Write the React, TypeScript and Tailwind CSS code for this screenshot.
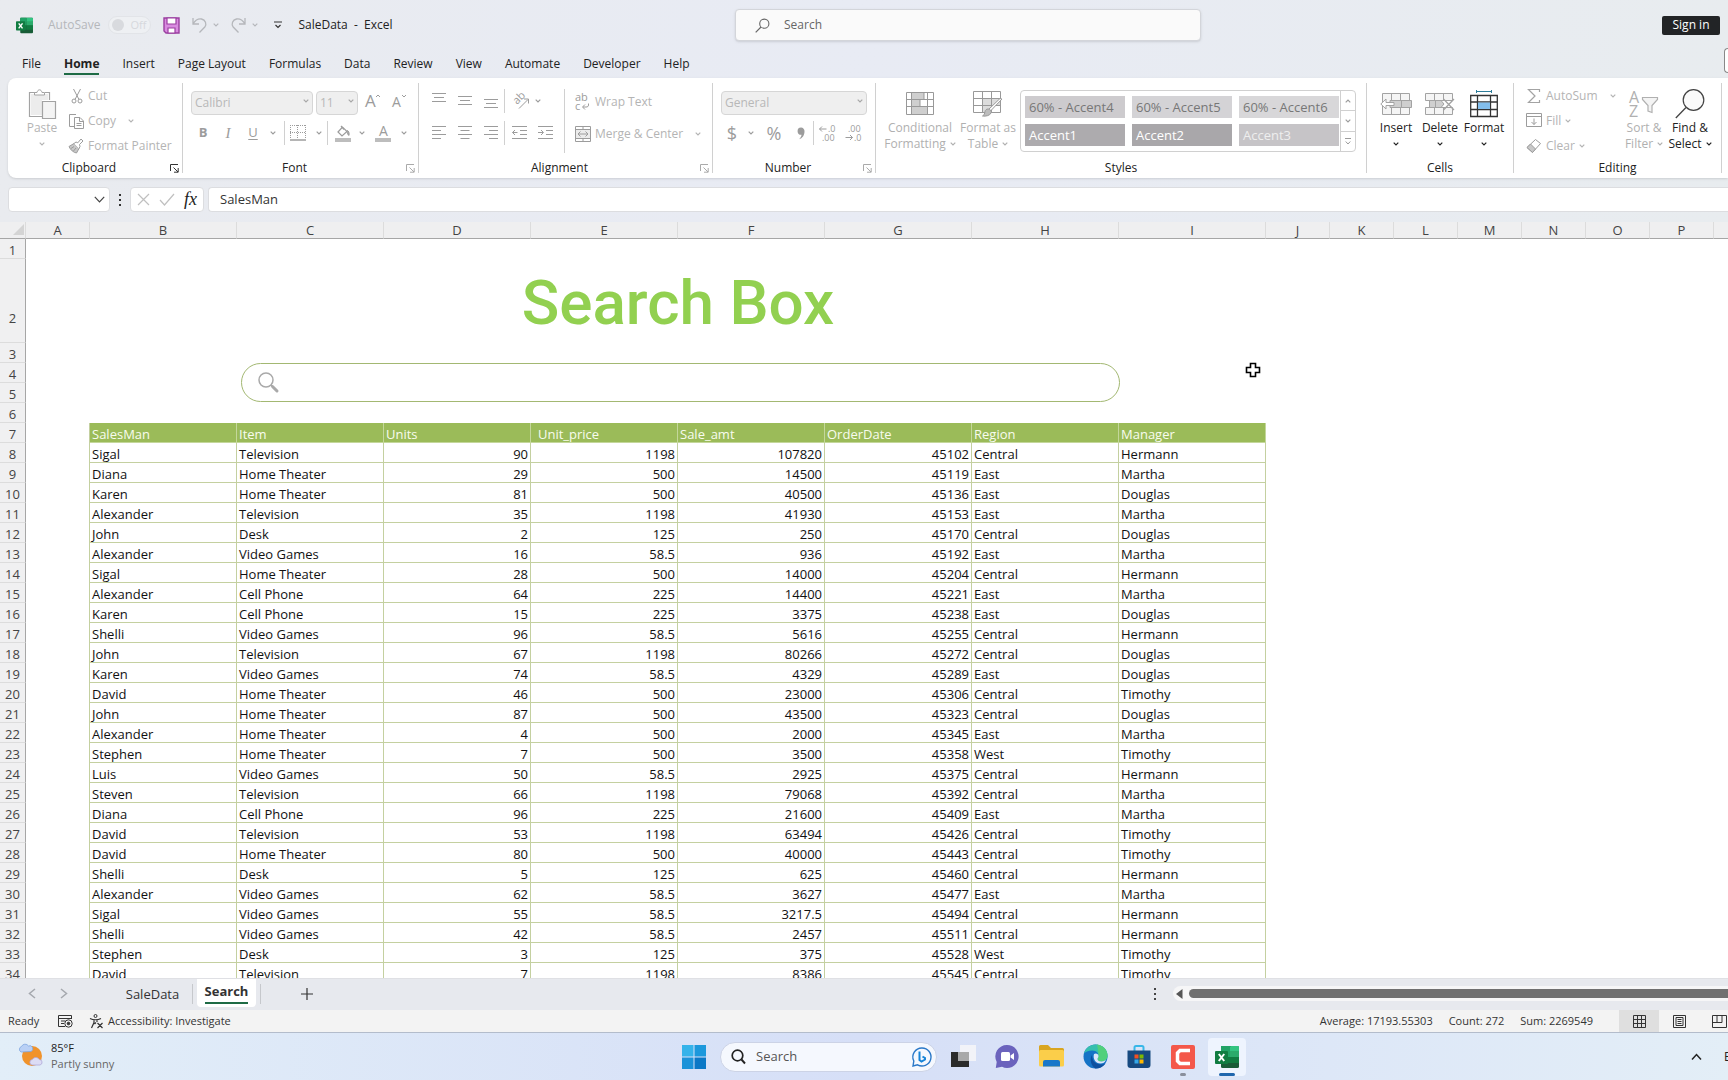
import type { ReactNode } from "react";
import clsx from "clsx";

type SaleRow = [string, string, string, string, string, string, string, string];

const TABS = [
  "File",
  "Home",
  "Insert",
  "Page Layout",
  "Formulas",
  "Data",
  "Review",
  "View",
  "Automate",
  "Developer",
  "Help",
];

const WIDE_COLUMNS = ["B", "C", "D", "E", "F", "G", "H", "I"];
const NARROW_COLUMNS = ["J", "K", "L", "M", "N", "O", "P", "Q"];

const HEADERS = [
  "SalesMan",
  "Item",
  "Units",
  "Unit_price",
  "Sale_amt",
  "OrderDate",
  "Region",
  "Manager",
];

const SALES: SaleRow[] = [
  ["Sigal", "Television", "90", "1198", "107820", "45102", "Central", "Hermann"],
  ["Diana", "Home Theater", "29", "500", "14500", "45119", "East", "Martha"],
  ["Karen", "Home Theater", "81", "500", "40500", "45136", "East", "Douglas"],
  ["Alexander", "Television", "35", "1198", "41930", "45153", "East", "Martha"],
  ["John", "Desk", "2", "125", "250", "45170", "Central", "Douglas"],
  ["Alexander", "Video Games", "16", "58.5", "936", "45192", "East", "Martha"],
  ["Sigal", "Home Theater", "28", "500", "14000", "45204", "Central", "Hermann"],
  ["Alexander", "Cell Phone", "64", "225", "14400", "45221", "East", "Martha"],
  ["Karen", "Cell Phone", "15", "225", "3375", "45238", "East", "Douglas"],
  ["Shelli", "Video Games", "96", "58.5", "5616", "45255", "Central", "Hermann"],
  ["John", "Television", "67", "1198", "80266", "45272", "Central", "Douglas"],
  ["Karen", "Video Games", "74", "58.5", "4329", "45289", "East", "Douglas"],
  ["David", "Home Theater", "46", "500", "23000", "45306", "Central", "Timothy"],
  ["John", "Home Theater", "87", "500", "43500", "45323", "Central", "Douglas"],
  ["Alexander", "Home Theater", "4", "500", "2000", "45345", "East", "Martha"],
  ["Stephen", "Home Theater", "7", "500", "3500", "45358", "West", "Timothy"],
  ["Luis", "Video Games", "50", "58.5", "2925", "45375", "Central", "Hermann"],
  ["Steven", "Television", "66", "1198", "79068", "45392", "Central", "Martha"],
  ["Diana", "Cell Phone", "96", "225", "21600", "45409", "East", "Martha"],
  ["David", "Television", "53", "1198", "63494", "45426", "Central", "Timothy"],
  ["David", "Home Theater", "80", "500", "40000", "45443", "Central", "Timothy"],
  ["Shelli", "Desk", "5", "125", "625", "45460", "Central", "Hermann"],
  ["Alexander", "Video Games", "62", "58.5", "3627", "45477", "East", "Martha"],
  ["Sigal", "Video Games", "55", "58.5", "3217.5", "45494", "Central", "Hermann"],
  ["Shelli", "Video Games", "42", "58.5", "2457", "45511", "Central", "Hermann"],
  ["Stephen", "Desk", "3", "125", "375", "45528", "West", "Timothy"],
  ["David", "Television", "7", "1198", "8386", "45545", "Central", "Timothy"],
];

/* ---------- small shared pieces ---------- */

function Svg({
  w,
  h,
  children,
  className,
}: {
  w: number;
  h: number;
  children: ReactNode;
  className?: string;
}) {
  return (
    <svg
      width={w}
      height={h}
      viewBox={`0 0 ${w} ${h}`}
      fill="none"
      stroke="currentColor"
      aria-hidden="true"
      className={clsx("shrink-0 overflow-visible", className)}
    >
      {children}
    </svg>
  );
}

// Letters that belong to an icon
function Glyph({
  x,
  y,
  size,
  children,
  transform,
}: {
  x: number;
  y: number;
  size: number;
  children: string;
  transform?: string;
}) {
  return (
    <text x={x} y={y} fontSize={size} fill="currentColor" stroke="none" transform={transform}>
      {children}
    </text>
  );
}

function Chevron({ className }: { className?: string }) {
  return (
    <Svg w={6} h={4} className={className}>
      <path d="M0.7 0.7L3 3l2.3-2.3" strokeWidth="1.2" />
    </Svg>
  );
}

function IconButton({
  label,
  children,
  className = "w-[26px]",
}: {
  label: string;
  children: ReactNode;
  className?: string;
}) {
  return (
    <button
      type="button"
      aria-label={label}
      className={clsx("flex h-6 shrink-0 items-center justify-center", className)}
    >
      {children}
    </button>
  );
}

function Divider({ className = "h-6" }: { className?: string }) {
  return <div className={clsx("w-px shrink-0 bg-[#d0d0d0]", className)} />;
}

function Dropdown({
  label,
  value,
  className,
}: {
  label: string;
  value: string;
  className: string;
}) {
  return (
    <div className={clsx("relative h-6", className)}>
      <select
        aria-label={label}
        defaultValue={value}
        className="h-6 w-full appearance-none rounded-sm border border-[#d6d6d6] bg-[#efefef] pl-[3px] text-xs text-[#b8b8b8]"
      >
        <option>{value}</option>
      </select>
      <Chevron className="pointer-events-none absolute top-2.5 right-1 text-[#a8a8a8]" />
    </div>
  );
}

function Group({
  name,
  className,
  children,
  launcher,
  dark,
}: {
  name: string;
  className: string;
  children: ReactNode;
  launcher?: boolean;
  dark?: boolean;
}) {
  return (
    <section aria-label={name} className={clsx("flex shrink-0 pt-[5px]", className)}>
      <div className="flex min-w-0 flex-1 flex-col">
        <div className="flex h-[75px] shrink-0">{children}</div>
        <div className="flex h-5 shrink-0 items-center">
          <span className="flex-1 text-center text-xs text-[#222]">{name}</span>
          {launcher && (
            <button type="button" aria-label={`${name} settings`} className="w-3">
              <Svg w={9} h={9} className={dark ? "text-[#333]" : "text-[#aaa]"}>
                <path d="M0.5 7V0.5H8M3.5 3.5L8 8M8.2 4v4.2H4" />
              </Svg>
            </button>
          )}
        </div>
      </div>
      <div className="h-[90px] w-px bg-[#d0d0d0]" />
    </section>
  );
}

function SmallCommand({
  icon,
  text,
  arrow,
}: {
  icon: ReactNode;
  text: string;
  arrow?: string;
}) {
  return (
    <button type="button" className="flex h-[26px] items-center whitespace-nowrap text-xs text-[#b4b4b4]">
      <span className="flex w-5 shrink-0 items-center justify-start text-[#9c9c9c]">{icon}</span>
      {text}
      {arrow && <Chevron className={arrow} />}
    </button>
  );
}

function TallCommand({
  icon,
  lines,
  className,
}: {
  icon: ReactNode;
  lines: string[];
  className: string;
}) {
  return (
    <button
      type="button"
      className={clsx("flex shrink-0 flex-col items-center pt-1 text-xs leading-4 whitespace-nowrap", className)}
    >
      <span className="flex h-[33px] items-center">{icon}</span>
      <span>{lines[0]}</span>
      <span className="flex h-4 items-center gap-1">
        {lines[1]}
        <Chevron />
      </span>
    </button>
  );
}

/* ---------- icons ---------- */

function ExcelIcon({ size }: { size: number }) {
  return (
    <svg width={size} height={size} viewBox="0 0 24 24" aria-hidden="true" className="shrink-0">
      <rect x="6" y="1" width="18" height="22" rx="1.5" fill="#185c37" />
      <rect x="6" y="1" width="9" height="11" fill="#21a366" />
      <rect x="15" y="1" width="9" height="6" rx="1" fill="#33c481" />
      <rect x="15" y="6" width="9" height="6" fill="#2bab6b" />
      <rect x="6" y="12" width="9" height="6" fill="#107c41" />
      <rect x="15" y="12" width="9" height="6" fill="#107c41" />
      <rect x="0" y="6" width="13" height="13" rx="1" fill="#107c41" />
      <path d="M3.8 9l5.4 7M9.2 9l-5.4 7" stroke="#fff" strokeWidth="2" fill="none" />
    </svg>
  );
}

const SaveIcon = () => (
  <Svg w={17} h={17} className="text-[#9a3fa0]">
    <path d="M1 1h15v15H3l-2-2z" fill="#d98be0" strokeWidth="1.4" />
    <path d="M4 1h9v6H4z" fill="#fff" strokeWidth="1.2" />
    <path d="M5 16v-5h7v5z" fill="#fff" strokeWidth="1.2" />
  </Svg>
);

const UndoIcon = () => (
  <Svg w={15} h={18}>
    <path d="M1 2v6h6M1.300 7.500C3.500 4 6.500 2.500 9.500 3c4 .8 5.500 5 3.300 8L7.500 16.500" strokeWidth="1.3" />
  </Svg>
);

const RedoIcon = () => (
  <Svg w={15} h={18}>
    <path d="M14 2v6H8M13.700 7.500C11.500 4 8.500 2.500 5.500 3c-4 .8-5.500 5-3.300 8L7.500 16.500" strokeWidth="1.3" />
  </Svg>
);

const SearchLens = () => (
  <Svg w={15} h={15}>
    <circle cx="9.300" cy="5.700" r="4.600" strokeWidth="1.1" />
    <path d="M6 9L0.700 14.300" strokeWidth="1.2" />
  </Svg>
);

const PasteIcon = () => (
  <Svg w={28} h={30} className="text-[#a3a3a3]">
    <path d="M7 3.500H1.500v24H14M17 3.500h4.500V11" fill="none" strokeWidth="1.2" />
    <path d="M3 5h17v6h-6v15H3z" fill="#ececec" stroke="none" />
    <path d="M6.500 6V3.500H9C9.500 1.500 10.500.8 11.500.8s2 .7 2.500 2.700h2.500V6z" fill="#fff" />
    <path d="M14.500 12.500h13v17h-13z" fill="#f4f4f4" strokeWidth="1.2" />
  </Svg>
);

const CutIcon = () => (
  <Svg w={16} h={16}>
    <path d="M5.500 1l5.500 10.500M12.500 1L7 11.500" />
    <circle cx="6" cy="13" r="2" />
    <circle cx="12" cy="13" r="2" />
  </Svg>
);

const CopyIcon = () => (
  <Svg w={17} h={16}>
    <path d="M6 13.500H1.500v-12H8M6.500 4.500H12l3.500 3.500v7.500h-9zM11.500 4.500V8.500h4" />
    <path d="M8.500 10.500h5M8.500 12.500h5" />
  </Svg>
);

const PainterIcon = () => (
  <Svg w={16} h={16}>
    <path d="M1 8.500l5-3 5 5-2.500 4.500c-3-.5-6-3-7.500-6.500z" fill="#c8c8c8" />
    <path d="M6 5.500l2-1.500 1.800.8L13 1l2 2-3.500 3.500.500 2-1 2" fill="#fff" />
    <path d="M3 10.500l3-2M5.500 13l2.500-3" />
  </Svg>
);

const AlignIcon = ({ lines }: { lines: [number, number, number][] }) => (
  <Svg w={16} h={16}>
    {lines.map(([x, y, len]) => (
      <path key={y} d={`M${x} ${y}.5h${len}`} />
    ))}
  </Svg>
);

const BorderIcon = () => (
  <Svg w={16} h={16}>
    <path d="M0 .5h16M.5 0v14M15.500 0v14M0 7.500h16M7.500 0v14" strokeDasharray="1 1" />
    <path d="M0 15h16" strokeWidth="1.5" />
  </Svg>
);

const FillColorIcon = () => (
  <Svg w={16} h={17}>
    <path d="M3 7L7.500 2l4.500 4.500-5 4.500zM6 1l3 3.500" strokeWidth="1.200" />
    <path d="M12 5.500c1.500.3 2.500 2 2 5-1-.5-1.500-2-2-3" fill="#aaa" />
    <path d="M0 15h16" stroke="#bdbdbd" strokeWidth="4" />
  </Svg>
);

const FontColorIcon = () => (
  <Svg w={16} h={17}>
    <Glyph x={4} y={11} size={14}>
      A
    </Glyph>
    <path d="M0 15h16" stroke="#bdbdbd" strokeWidth="4" />
  </Svg>
);

const OrientationIcon = () => (
  <Svg w={17} h={17}>
    <Glyph x={0} y={0} size={11} transform="translate(5 12) rotate(-45)">
      ab
    </Glyph>
    <path d="M7 15.500L16 6.500M12 6h4.500v4.500" />
  </Svg>
);

const WrapIcon = () => (
  <Svg w={16} h={16}>
    <Glyph x={0} y={7} size={11}>
      ab
    </Glyph>
    <Glyph x={0} y={16} size={11}>
      c
    </Glyph>
    <path d="M13.500 9.500v1.500c0 1.500-1 2-2.500 2H8M10 10.500L7.500 13l2.500 2.500" />
  </Svg>
);

const MergeIcon = () => (
  <Svg w={16} h={16}>
    <path d="M.5 .5h15v15H.5zM.5 3.500h15M.5 12.500h15M8 .5v3M8 12.500v3" />
    <path d="M1 4h14v8H1z" fill="#ebebeb" stroke="none" />
    <path d="M3 8h10M5.500 5.500L3 8l2.500 2.500M10.500 5.500L13 8l-2.500 2.500" />
  </Svg>
);

const IndentIcon = ({ right }: { right?: boolean }) => (
  <Svg w={16} h={16}>
    <path d="M0 1.500h15M8 5.500h7M8 9.500h7M0 13.500h15" />
    <path d={right ? "M0 7.500h5M3 5l2.500 2.500L3 10" : "M.5 7.500h5M3 5L.5 7.500 3 10"} />
  </Svg>
);

const DecimalIcon = ({ more }: { more?: boolean }) => (
  <Svg w={17} h={16}>
    <Glyph x={more ? 9 : 3} y={7} size={9}>
      {more ? ".0" : ".00"}
    </Glyph>
    <Glyph x={more ? 3 : 9} y={16} size={9}>
      {more ? ".00" : ".0"}
    </Glyph>
    <path d={more ? "M.5 4h7M3 1.500L.5 4 3 6.500" : "M.5 12.500h7M5 10l2.500 2.500L5 15"} />
  </Svg>
);

const CondFormatIcon = () => (
  <Svg w={28} h={23} className="text-[#999]">
    <path d="M6 1h12v7H6zM6 8h8v7H6zM6 15h15v7H6z" fill="#cfcfcf" stroke="none" />
    <path d="M.5 .5h27v22H.5zM.5 7.500h27M.5 14.500h27M5.500 .5v22M18 .5v7M14 7.500v7M21.500 .5v22" />
  </Svg>
);

const TableFormatIcon = () => (
  <Svg w={30} h={27} className="text-[#999]">
    <path d="M10 8h9v14h-9zM19 8h8v7h-8z" fill="#dcdcdc" stroke="none" />
    <path d="M.5 1.500h27v21H.5zM.5 8.500h27M.5 15.500h27M9.500 1.500v21M18.500 1.500v21" />
    <path d="M29 9L17.500 21l-2-1.500L27 8.500z" fill="#fff" />
    <path d="M15 19c2 0 4 2 3 4-1 2.500-5 3.500-8.500 3 2-1 2-2.500 2.500-4.500.3-1.500 1.500-2.500 3-2.500z" fill="#bdbdbd" />
  </Svg>
);

const InsertCellsIcon = () => (
  <Svg w={32} h={24} className="text-[#a3a3a3]">
    <path d="M2.500 1.500h27v21h-27zM11.500 1.500v21M20.500 1.500v21" fill="#f5f5f5" />
    <path d="M10 8.500h21.500v7H10z" fill="#cfcfcf" />
    <path d="M21.500 8.500v7" />
    <path d="M14 10.500H6V7L.8 12 6 17v-3.500h8z" fill="#fff" />
  </Svg>
);

const DeleteCellsIcon = () => (
  <Svg w={30} h={24} className="text-[#a3a3a3]">
    <path d="M.5 1.500h27v7H.5zM.5 15.500h27v7H.5zM9.500 1.500v7M18.500 1.500v7M9.500 15.500v7M18.500 15.500v7" fill="#f5f5f5" />
    <path d="M4.500 8.500H16l3 3.500-3 3.500H4.500z" fill="#cfcfcf" />
    <path d="M10.500 8.500v7" />
    <path d="M18.500 7L29 18M29 7L18.500 18" strokeWidth="1.3" />
  </Svg>
);

const FormatCellsIcon = () => (
  <Svg w={28} h={27} className="text-[#333]">
    <path d="M6.500 1.500h15M6.500 0v3M21.500 0v3" stroke="#2d7d9a" />
    <path d="M.7 5.500h26.600v21H.7zM.7 12h26.600M.7 19.500h26.600M7.500 5.500v21M20.500 5.500v21" strokeWidth="1.300" />
    <path d="M8 12.500h12v6.500H8z" fill="#83beec" stroke="none" />
  </Svg>
);

const SigmaIcon = () => (
  <Svg w={16} h={16} className="text-[#a3a3a3]">
    <path d="M13.500 4V1.500H2.500L9 8l-6.500 6.500h11V12" strokeWidth="1.2" />
  </Svg>
);

const FillDownIcon = () => (
  <Svg w={16} h={15}>
    <path d="M.5 .5h15v13H.5zM.5 3.500h15M8 5.500v6M5.500 9L8 11.500 10.500 9" />
  </Svg>
);

const EraserIcon = () => (
  <Svg w={16} h={16}>
    <path d="M1 9.500L9.500 1.500l5 4L6.500 14.500z" fill="#fff" />
    <path d="M1 9.500L4.500 6l5 5-3 3.500z" fill="#c8c8c8" />
  </Svg>
);

const SortFilterIcon = () => (
  <Svg w={30} h={28}>
    <Glyph x={0} y={13} size={16}>
      A
    </Glyph>
    <Glyph x={0} y={27} size={16}>
      Z
    </Glyph>
    <path d="M13.500 7.500h15v2l-5.500 6v7l-4-1.500v-5.500l-5.500-6z" fill="#f4f4f4" strokeWidth="1.200" />
  </Svg>
);

const FindIcon = () => (
  <Svg w={30} h={30} className="text-[#444]">
    <circle cx="18.500" cy="11" r="10.300" fill="#fafafa" strokeWidth="1.200" />
    <path d="M11 18.500L.8 29" strokeWidth="1.300" />
  </Svg>
);

/* ---------- window chrome ---------- */

function TitleBar() {
  return (
    <header className="flex h-12 shrink-0 items-center pt-0.5">
      <div className="flex w-[735px] shrink-0 items-center pl-4 text-[#b5b7bb]">
        <ExcelIcon size={17} />
        <label className="ml-[15px] flex items-center gap-2 text-xs">
          AutoSave
          <input type="checkbox" role="switch" className="sr-only" />
          <span className="flex h-[18px] w-[43px] items-center gap-1.5 rounded-full border border-[#e2e4e8] bg-[#eef0f3] pl-[3px] text-[11px] text-[#d6d8dd]">
            <span className="size-3 shrink-0 rounded-full bg-[#d8dade]" />
            Off
          </span>
        </label>
        <button type="button" aria-label="Save" className="ml-3">
          <SaveIcon />
        </button>
        <button type="button" aria-label="Undo" className="ml-3 flex items-center gap-1.5">
          <UndoIcon />
          <Chevron />
        </button>
        <button type="button" aria-label="Redo" className="ml-3 flex items-center gap-1.5">
          <RedoIcon />
          <Chevron />
        </button>
        <button type="button" aria-label="Customize Quick Access Toolbar" className="ml-4 text-[#333]">
          <Svg w={8} h={8}>
            <path d="M0 1h8M1.500 4L4 6.500 6.500 4" strokeWidth="1.200" />
          </Svg>
        </button>
        <span className="ml-4 text-xs whitespace-pre text-[#222]">SaleData  -  Excel</span>
      </div>
      <label className="flex h-8 w-[466px] shrink-0 items-center gap-3.5 rounded-sm border border-[#d3d5da] bg-[#fafafa] pl-[19px] text-[#666] shadow-sm">
        <SearchLens />
        <input
          aria-label="Search"
          placeholder="Search"
          className="flex-1 bg-transparent text-xs outline-none placeholder:text-[#666]"
        />
      </label>
      <button type="button" className="mr-2 ml-auto h-[19px] w-[58px] rounded-xs bg-[#222426] text-xs text-white">
        Sign in
      </button>
    </header>
  );
}

function MenuTabs() {
  return (
    <nav className="flex h-[30px] shrink-0 items-start gap-[23px] pl-[22px] text-xs text-[#222]">
      {TABS.map((tab) => (
        <button
          type="button"
          key={tab}
          className={clsx(
            "flex h-[27px] items-center border-b-2 pt-1.5 whitespace-nowrap",
            tab === "Home" ? "border-[#1e6b45] font-bold" : "border-transparent"
          )}
        >
          {tab}
        </button>
      ))}
      <button
        type="button"
        aria-label="Comments"
        className="ml-auto h-[25px] w-1 rounded-l border border-r-0 border-[#888] bg-white"
      />
    </nav>
  );
}

function StyleSwatch({ name, className }: { name: string; className: string }) {
  return (
    <button type="button" className={clsx("h-[22px] w-[100px] pl-1 text-left text-[13px] leading-5", className)}>
      {name}
    </button>
  );
}

function Ribbon() {
  return (
    <div className="ml-2 flex h-[100px] shrink-0 overflow-hidden rounded-l-lg bg-white text-[#9c9c9c] shadow">
      <Group name="Clipboard" className="w-[175px]" launcher dark>
        <TallCommand icon={<PasteIcon />} lines={["Paste", ""]} className="w-[60px] pl-2 text-[#b4b4b4]" />
        <div className="flex flex-col">
          <SmallCommand icon={<CutIcon />} text="Cut" />
          <SmallCommand icon={<CopyIcon />} text="Copy" arrow="ml-3" />
          <SmallCommand icon={<PainterIcon />} text="Format Painter" />
        </div>
      </Group>

      <Group name="Font" className="w-[236px]" launcher>
        <div className="flex flex-col gap-2 pt-1.5 pl-2">
          <div className="flex items-center">
            <Dropdown label="Font" value="Calibri" className="w-[122px]" />
            <Dropdown label="Font Size" value="11" className="ml-[3px] w-[42px]" />
            <IconButton label="Increase Font Size" className="ml-0.5 w-[26px]">
              <Svg w={16} h={16}>
                <Glyph x={0} y={14} size={17}>
                  A
                </Glyph>
                <path d="M11 4l2-2 2 2" />
              </Svg>
            </IconButton>
            <IconButton label="Decrease Font Size">
              <Svg w={15} h={16}>
                <Glyph x={0} y={14} size={14}>
                  A
                </Glyph>
                <path d="M10 2l2 2 2-2" />
              </Svg>
            </IconButton>
          </div>
          <div className="flex items-center">
            <IconButton label="Bold" className="w-6">
              <b className="text-[13px]">B</b>
            </IconButton>
            <IconButton label="Italic">
              <i className="font-['Liberation_Serif',serif] text-[15px]">I</i>
            </IconButton>
            <IconButton label="Underline" className="w-6">
              <u className="text-[13px] underline-offset-2">U</u>
            </IconButton>
            <IconButton label="Underline style" className="w-4">
              <Chevron />
            </IconButton>
            <Divider className="ml-[3px] h-6" />
            <IconButton label="Borders">
              <BorderIcon />
            </IconButton>
            <IconButton label="Border style" className="w-4">
              <Chevron />
            </IconButton>
            <Divider />
            <IconButton label="Fill Color" className="w-[30px]">
              <FillColorIcon />
            </IconButton>
            <IconButton label="Fill Color list" className="w-2">
              <Chevron />
            </IconButton>
            <IconButton label="Font Color" className="w-[34px]">
              <FontColorIcon />
            </IconButton>
            <IconButton label="Font Color list" className="w-2">
              <Chevron />
            </IconButton>
          </div>
        </div>
      </Group>

      <Group name="Alignment" className="w-[294px]" launcher>
        <div className="flex w-[145px] flex-col gap-2 pt-1.5 pl-[7px]">
          <div className="flex items-center">
            <IconButton label="Top Align">
              <AlignIcon lines={[[1, 0, 14], [3, 4, 10], [1, 8, 14]]} />
            </IconButton>
            <IconButton label="Middle Align">
              <AlignIcon lines={[[1, 3, 14], [3, 7, 10], [1, 11, 14]]} />
            </IconButton>
            <IconButton label="Bottom Align">
              <AlignIcon lines={[[1, 6, 14], [3, 10, 10], [1, 14, 14]]} />
            </IconButton>
            <Divider />
            <IconButton label="Orientation" className="w-[30px]">
              <OrientationIcon />
            </IconButton>
            <Chevron />
          </div>
          <div className="flex items-center">
            <IconButton label="Align Left">
              <Svg w={16} h={16}>
                <path d="M1 1.500h14M1 5.500h9M1 9.500h14M1 13.500h9" />
              </Svg>
            </IconButton>
            <IconButton label="Center">
              <Svg w={16} h={16}>
                <path d="M1 1.500h14M3.500 5.500h9M1 9.500h14M3.500 13.500h9" />
              </Svg>
            </IconButton>
            <IconButton label="Align Right">
              <Svg w={16} h={16}>
                <path d="M1 1.500h14M6 5.500h9M1 9.500h14M6 13.500h9" />
              </Svg>
            </IconButton>
            <Divider />
            <IconButton label="Decrease Indent" className="w-[30px]">
              <IndentIcon />
            </IconButton>
            <IconButton label="Increase Indent" className="w-[22px]">
              <IndentIcon right />
            </IconButton>
          </div>
        </div>
        <Divider className="mt-1.5 h-16" />
        <div className="flex flex-col gap-1.5 pt-1.5 pl-2.5">
          <SmallCommand icon={<WrapIcon />} text="Wrap Text" />
          <SmallCommand icon={<MergeIcon />} text="Merge & Center" arrow="ml-3" />
        </div>
      </Group>

      <Group name="Number" className="w-[163px]" launcher>
        <div className="flex flex-col gap-2 pt-1.5 pl-2">
          <Dropdown label="Number Format" value="General" className="w-[146px]" />
          <div className="flex items-center">
            <IconButton label="Accounting Format" className="w-[22px]">
              <span className="text-lg leading-6">$</span>
            </IconButton>
            <IconButton label="Accounting list" className="w-4">
              <Chevron />
            </IconButton>
            <IconButton label="Percent Style" className="w-[30px]">
              <span className="text-lg leading-6">%</span>
            </IconButton>
            <IconButton label="Comma Style" className="w-[24px]">
              <Svg w={8} h={13}>
                <path
                  d="M4 .5a3.500 3.500 0 0 1 3.500 3.800c0 4-2 7-5.500 8 1.500-1.300 2.500-3 2.500-4.500A3.600 3.600 0 1 1 4 .5z"
                  fill="currentColor"
                  stroke="none"
                />
              </Svg>
            </IconButton>
            <Divider />
            <IconButton label="Increase Decimal">
              <DecimalIcon more />
            </IconButton>
            <IconButton label="Decrease Decimal">
              <DecimalIcon />
            </IconButton>
          </div>
        </div>
      </Group>

      <Group name="Styles" className="w-[491px]">
        <TallCommand
          icon={<CondFormatIcon />}
          lines={["Conditional", "Formatting"]}
          className="ml-1 w-20 text-[#b0b0b0]"
        />
        <TallCommand
          icon={<TableFormatIcon />}
          lines={["Format as", "Table"]}
          className="w-14 text-[#b0b0b0]"
        />
        <div className="mt-[7px] ml-1 flex h-[62px] w-[336px] rounded border border-[#d0d0d0]">
          <div className="grid flex-1 grid-cols-3 content-center gap-1.5 pl-1">
            <StyleSwatch name="60% - Accent4" className="bg-[#cdcbce] text-[#777]" />
            <StyleSwatch name="60% - Accent5" className="bg-[#d4d3d6] text-[#777]" />
            <StyleSwatch name="60% - Accent6" className="bg-[#d8d7d9] text-[#777]" />
            <StyleSwatch name="Accent1" className="bg-[#adabae] text-white" />
            <StyleSwatch name="Accent2" className="bg-[#a9a7aa] text-white" />
            <StyleSwatch name="Accent3" className="bg-[#c6c4c7] text-[#eee]" />
          </div>
          <div className="flex w-[15px] flex-col divide-y divide-[#d0d0d0] border-l border-[#d0d0d0]">
            <button type="button" aria-label="Previous styles" className="flex flex-1 items-center justify-center">
              <Chevron className="rotate-180" />
            </button>
            <button type="button" aria-label="Next styles" className="flex flex-1 items-center justify-center">
              <Chevron />
            </button>
            <button type="button" aria-label="More styles" className="flex flex-1 items-center justify-center">
              <Svg w={6} h={7}>
                <path d="M0 .5h6M.7 3.500L3 6l2.300-2.500" />
              </Svg>
            </button>
          </div>
        </div>
      </Group>

      <Group name="Cells" className="w-[147px]">
        <TallCommand icon={<InsertCellsIcon />} lines={["Insert", ""]} className="ml-[7px] w-11 text-[#222]" />
        <TallCommand icon={<DeleteCellsIcon />} lines={["Delete", ""]} className="w-11 text-[#222]" />
        <TallCommand icon={<FormatCellsIcon />} lines={["Format", ""]} className="w-11 text-[#222]" />
      </Group>

      <Group name="Editing" className="w-[208px]">
        <div className="flex w-[107px] flex-col pl-3">
          <SmallCommand icon={<SigmaIcon />} text="AutoSum" arrow="ml-3" />
          <SmallCommand icon={<FillDownIcon />} text="Fill" arrow="ml-1" />
          <SmallCommand icon={<EraserIcon />} text="Clear" arrow="ml-1" />
        </div>
        <TallCommand
          icon={<SortFilterIcon />}
          lines={["Sort &", "Filter"]}
          className="w-[46px] text-[#b0b0b0]"
        />
        <TallCommand icon={<FindIcon />} lines={["Find &", "Select"]} className="w-[46px] text-[#222]" />
      </Group>
    </div>
  );
}

function FormulaBar() {
  const box = "h-[25px] rounded border border-[#dcdde0] bg-white";
  return (
    <div className="flex h-11 shrink-0 items-start pt-[9px] pl-2">
      <label className={clsx(box, "flex w-[102px] items-center pr-1")}>
        <input aria-label="Name Box" className="w-full min-w-0 bg-transparent pl-2 text-xs outline-none" />
        <Svg w={11} h={7} className="text-[#444]">
          <path d="M.8 .8l4.700 5 4.700-5" strokeWidth="1.200" />
        </Svg>
      </label>
      <Svg w={20} h={25} className="text-[#333]">
        <path d="M10 7v2M10 12v2M10 17v2" strokeWidth="2" />
      </Svg>
      <div className={clsx(box, "flex w-[74px] items-center justify-between px-1.5 text-[#c0c0c0]")}>
        <button type="button" aria-label="Cancel">
          <Svg w={13} h={13}>
            <path d="M1 1l11 11M12 1L1 12" strokeWidth="1.200" />
          </Svg>
        </button>
        <button type="button" aria-label="Enter">
          <Svg w={16} h={13}>
            <path d="M1 7l4.500 5L15 1" strokeWidth="1.200" />
          </Svg>
        </button>
        <button
          type="button"
          aria-label="Insert Function"
          className="pb-0.5 font-['Liberation_Serif',serif] text-lg leading-5 text-[#222] italic"
        >
          fx
        </button>
      </div>
      <input
        aria-label="Formula Bar"
        defaultValue="SalesMan"
        className="ml-1 h-[25px] min-w-0 flex-1 rounded-l border border-r-0 border-[#dcdde0] bg-white pb-0.5 pl-[11px] text-[13px] text-[#333] outline-none"
      />
    </div>
  );
}

/* ---------- worksheet ---------- */

function RowNumber({ n, tall }: { n: number; tall?: boolean }) {
  return (
    <th
      scope="row"
      className={clsx(
        "border-r border-b border-r-[#a6a6a6] border-b-[#dcdcdc] bg-[#f0f0f1] p-0 text-center align-bottom text-[13px] leading-4 font-normal text-[#444]",
        tall ? "h-[84px] pb-4" : "h-5"
      )}
    >
      {n}
    </th>
  );
}

function Worksheet() {
  return (
    <main className="relative min-h-0 flex-1 overflow-hidden bg-white">
      <table className="w-[1778px] table-fixed border-separate border-spacing-0 text-[13px] leading-4 text-[#111]">
        <colgroup>
          <col className="w-[26px]" />
          <col className="w-16" />
          {WIDE_COLUMNS.map((c) => (
            <col key={c} className="w-[147px]" />
          ))}
          {NARROW_COLUMNS.map((c) => (
            <col key={c} className="w-16" />
          ))}
        </colgroup>
        <thead>
          <tr>
            <td className="h-[17px] border-r border-b border-r-[#dcdcdc] border-b-[#a6a6a6] bg-[#efeff0] p-0">
              <Svg w={12} h={12} className="ml-auto text-[#d4d4d4]">
                <path d="M11 0v11H0z" fill="currentColor" stroke="none" />
              </Svg>
            </td>
            {["A", ...WIDE_COLUMNS, ...NARROW_COLUMNS].map((c) => (
              <th
                key={c}
                scope="col"
                className="h-[17px] border-r border-b border-r-[#dcdcdc] border-b-[#a6a6a6] bg-[#efeff0] p-0 align-top text-[13px] leading-4 font-normal text-[#444]"
              >
                {c}
              </th>
            ))}
          </tr>
        </thead>
        <tbody>
          <tr>
            <RowNumber n={1} />
          </tr>
          <tr>
            <RowNumber n={2} tall />
            <td />
            <td colSpan={8} className="p-0 pt-1 text-center">
              <h1 className="font-[Roboto,sans-serif] text-[62px] leading-[80px] font-medium text-[#92d050]">
                Search Box
              </h1>
            </td>
          </tr>
          <tr>
            <RowNumber n={3} />
          </tr>
          <tr>
            <RowNumber n={4} />
            <td colSpan={2} rowSpan={2} />
            <td colSpan={7} rowSpan={2} className="p-0 pl-1 align-top">
              <label className="flex h-[39px] w-[879px] items-center gap-2 rounded-full border border-[#a3b872] pl-4">
                <Svg w={21} h={21} className="text-[#a9a9a9]">
                  <circle cx="8" cy="8" r="7" strokeWidth="1.500" />
                  <path d="M13 13l2 2" strokeWidth="1.500" />
                  <path d="M14.500 14.500l4.500 4.500" strokeWidth="3" strokeLinecap="round" />
                </Svg>
                <input aria-label="Search sales" className="flex-1 bg-transparent outline-none" />
              </label>
            </td>
          </tr>
          <tr>
            <RowNumber n={5} />
          </tr>
          <tr>
            <RowNumber n={6} />
          </tr>
          <tr>
            <RowNumber n={7} />
            <td className="border-r border-[#c4d0a0]" />
            {HEADERS.map((h) => (
              <th
                key={h}
                scope="col"
                className={clsx(
                  "border-r border-b border-[#c4d79b] bg-[#9bbb59] pt-[3px] pr-0.5 pb-0 text-left font-normal text-[#f8fbee]",
                  h === "Unit_price" ? "pl-[7px]" : "pl-0.5"
                )}
              >
                {h}
              </th>
            ))}
          </tr>
          {SALES.map((row, r) => (
            <tr key={row[5]}>
              <RowNumber n={r + 8} />
              <td className="border-r border-[#c4d0a0]" />
              {row.map((value, c) => (
                <td
                  key={HEADERS[c]}
                  className={clsx(
                    "border-r border-b border-[#c4d0a0] px-0.5 pt-[3px] pb-0",
                    c >= 2 && c <= 5 && "text-right"
                  )}
                >
                  {value}
                </td>
              ))}
            </tr>
          ))}
        </tbody>
      </table>

      {/* Cell-selection pointer */}
      <Svg w={17} h={17} className="absolute top-[140px] left-[1245px] text-black">
        <path d="M5.500 1.500h5v4h4v5h-4v4h-5v-4h-4v-5h4z" fill="#fff" strokeWidth="1.600" />
      </Svg>
    </main>
  );
}

function SheetTabs() {
  return (
    <div className="flex h-8 shrink-0 items-center border-t border-[#dfe0e4] bg-[#e7e9ee] pb-0.5 text-[13px] text-[#333]">
      <button type="button" aria-label="Previous sheet" className="ml-7 text-[#a5a8ae]">
        <Svg w={8} h={11}>
          <path d="M7 1L1.500 5.500 7 10" strokeWidth="1.500" />
        </Svg>
      </button>
      <button type="button" aria-label="Next sheet" className="ml-6 text-[#a5a8ae]">
        <Svg w={8} h={11}>
          <path d="M1 1l5.500 4.500L1 10" strokeWidth="1.500" />
        </Svg>
      </button>
      <button type="button" className="ml-[45px] h-5 w-20 border-r border-[#c6c8cc] leading-5">
        SaleData
      </button>
      <div className="ml-1 flex h-7 w-[59px] justify-center self-start rounded-b bg-white">
        <button type="button" className="h-[25px] border-b-2 border-[#1e6b45] leading-6 font-bold">
          Search
        </button>
      </div>
      <div className="ml-1 h-5 w-px bg-[#c6c8cc]" />
      <button type="button" aria-label="New sheet" className="ml-10">
        <Svg w={12} h={12}>
          <path d="M6 0v12M0 6h12" strokeWidth="1.200" />
        </Svg>
      </button>
      <Svg w={4} h={14} className="mr-4 ml-[840px] text-[#444]">
        <path d="M2 1v2M2 6v2M2 11v2" strokeWidth="2" />
      </Svg>
      <div className="flex h-[15px] flex-1 items-center rounded-l-full bg-[#f6f6f7] pl-[3px]">
        <Svg w={7} h={10} className="text-[#555]">
          <path d="M6.500 0v10L0 5z" fill="currentColor" stroke="none" />
        </Svg>
        <div className="ml-1.5 h-[9px] flex-1 rounded-l-full bg-[#707070]" />
      </div>
    </div>
  );
}

function StatusBar() {
  return (
    <div className="flex h-[23px] shrink-0 items-center border-b border-[#b3bccb] bg-[#f3f3f3] pl-2 text-[11px] text-[#333]">
      <span className="w-[50px]">Ready</span>
      <Svg w={15} h={13}>
        <path d="M7 11.500H.5v-11h13V4M.5 3.500h13M3 6h4M3 8.500h3" />
        <circle cx="10.500" cy="8.500" r="3.700" />
        <circle cx="10.500" cy="8.500" r="1.300" fill="currentColor" />
      </Svg>
      <button type="button" className="ml-4 flex items-center gap-1 whitespace-nowrap">
        <Svg w={15} h={15}>
          <circle cx="6.500" cy="2" r="1.500" />
          <path
            d="M1 4.500c3 1.500 8 1.500 11 0M5 5.500v3L2.500 14M8 5.500v2.500M5.500 10L7 8.500M8.500 9l5 5M13.500 9l-5 5"
            strokeWidth="1.200"
          />
        </Svg>
        Accessibility: Investigate
      </button>
      <div className="ml-auto flex gap-4 whitespace-nowrap">
        <span>Average: 17193.55303</span>
        <span>Count: 272</span>
        <span>Sum: 2269549</span>
      </div>
      <button
        type="button"
        aria-label="Normal view"
        className="ml-[26px] flex h-[22px] w-10 items-center justify-center bg-[#dfdfdf]"
      >
        <Svg w={13} h={13}>
          <path d="M.5 .5h12v12H.5zM.5 4.500h12M.5 8.500h12M4.500 .5v12M8.500 .5v12" />
        </Svg>
      </button>
      <button type="button" aria-label="Page layout view" className="flex w-10 justify-center">
        <Svg w={13} h={13}>
          <path d="M.5 .5h12v12H.5zM3 2.500h7v8H3zM4.500 4.500h4M4.500 6.500h4M4.500 8.500h4" />
        </Svg>
      </button>
      <button type="button" aria-label="Page break preview" className="ml-[13px] w-4">
        <Svg w={15} h={13}>
          <path d="M.5 .5h14v12H.5zM5 .5v7M10 .5v7M.5 7.500H10" />
        </Svg>
      </button>
    </div>
  );
}

function TaskButton({
  label,
  children,
  active,
}: {
  label: string;
  children: ReactNode;
  active?: boolean;
}) {
  return (
    <button type="button" aria-label={label} className="flex w-11 shrink-0 justify-center">
      <span
        className={clsx(
          "relative flex h-[38px] w-[38px] items-center justify-center rounded",
          active && "bg-[#eef4fe]"
        )}
      >
        {children}
      </span>
    </button>
  );
}

function Taskbar() {
  return (
    <footer className="flex h-[47px] shrink-0 items-center bg-linear-to-r from-[#e2eef8] via-[#d6dff7] to-[#e3eef7]">
      <div className="flex w-[672px] shrink-0 items-center gap-2 pb-0.5 pl-[18px]">
        <Svg w={25} h={25}>
          <circle cx="14" cy="13" r="10" fill="#f0932b" stroke="none" />
          <path
            d="M3 9a3 3 0 0 1 .5-5.500A4 4 0 0 1 10.500 3 3 3 0 0 1 13 8.500z"
            fill="#b9d0f5"
            stroke="#7fa6e0"
            strokeWidth=".8"
          />
          <path
            d="M14 22a2.800 2.800 0 0 1 .3-5.500 4 4 0 0 1 7 0A2.800 2.800 0 0 1 22 22z"
            fill="#dcdcf4"
            stroke="#b0a8d8"
            strokeWidth=".8"
          />
        </Svg>
        <div className="text-[11px] leading-4">
          <div className="text-[#222]">85°F</div>
          <div className="text-[#666]">Partly sunny</div>
        </div>
      </div>

      <TaskButton label="Start">
        <Svg w={24} h={24}>
          <path d="M0 0h11.500v11.500H0z" fill="#35b3ea" stroke="none" />
          <path d="M12.500 0H24v11.500H12.500z" fill="#1c98dc" stroke="none" />
          <path d="M0 12.500h11.500V24H0z" fill="#1b93d9" stroke="none" />
          <path d="M12.500 12.500H24V24H12.500z" fill="#0b78c6" stroke="none" />
        </Svg>
      </TaskButton>
      <label className="mx-1 flex h-[30px] w-[217px] shrink-0 items-center gap-2.5 rounded-full border border-[#ccd3e6] bg-[#f5f8fe] pr-1 pl-2.5 text-[#222]">
        <Svg w={15} h={16}>
          <circle cx="6.500" cy="6.500" r="5.300" strokeWidth="1.700" />
          <path d="M10.500 10.500L14 14.500" strokeWidth="1.900" />
        </Svg>
        <input
          aria-label="Search Windows"
          placeholder="Search"
          className="min-w-0 flex-1 bg-transparent text-[13px] outline-none placeholder:text-[#555]"
        />
        <Svg w={20} h={20}>
          <path
            d="M10 1a9 9 0 1 1-4.500 16.800L1 19l.8-5A9 9 0 0 1 10 1z"
            stroke="#2a78c8"
            strokeWidth="1.400"
          />
          <path d="M7.500 4.500v8.500l2 1.500 3.500-2v-1.500L10.500 9.500" stroke="#1784d8" strokeWidth="2" />
        </Svg>
      </label>
      <TaskButton label="Task View">
        <Svg w={25} h={23}>
          <path d="M9 0h16v16H9z" fill="#f2f3f8" stroke="none" />
          <path d="M0 7h18v15H0z" fill="#2b2b2b" stroke="none" />
          <path d="M7 7h11v9H7z" fill="#a9a9a9" stroke="none" />
        </Svg>
      </TaskButton>
      <TaskButton label="Chat">
        <Svg w={24} h={23}>
          <path d="M12 0a11.500 11.500 0 1 1-5 21.800L.8 23l.9-6A11.500 11.500 0 0 1 12 0z" fill="#6b63bd" stroke="none" />
          <rect x="6" y="7" width="9" height="9" rx="1.500" fill="#fff" stroke="none" />
          <path d="M15.500 10.500l3.500-2.500v7l-3.500-2.500z" fill="#fff" stroke="none" />
        </Svg>
      </TaskButton>
      <TaskButton label="File Explorer">
        <Svg w={25} h={23}>
          <path d="M0 1.500Q0 0 1.500 0H9l3 3h11.500Q25 3 25 4.500V12H0z" fill="#d9a520" stroke="none" />
          <rect y="5" width="25" height="16.500" rx="1.500" fill="#fbce4a" stroke="none" />
          <path d="M4 21.500V17q0-2 2-2h13q2 0 2 2v4.500z" fill="#1977c9" stroke="none" />
        </Svg>
      </TaskButton>
      <TaskButton label="Edge">
        <Svg w={25} h={25}>
          <circle cx="12.500" cy="12.500" r="12" fill="#1573c6" stroke="none" />
          <path
            d="M1 9.500C2.500 4 7 .5 12.500 .5c7 0 12 5 12 11 0 4-3 6-6 6s-4-1.500-4-2.500 1-1.500 1-3.500-2-5-6-5C5 6.500 2 8 1 9.500z"
            fill="#35bfae"
            stroke="none"
          />
          <path
            d="M14 .6c6 .8 10.500 5 10.500 11 0 4-3 5.900-6 5.900s-4-1.500-4-2.500 1-1.500 1-3.500c0-4-1-8-1.500-10.900z"
            fill="#52d07c"
            stroke="none"
          />
          <path
            d="M9 11c0 6 3.500 9.500 9 9.500 2 0 3.500-.5 4.500-1-2 3-6 5-10 5-4-2-6.500-9-3.500-13.500z"
            fill="#0d4f9e"
            stroke="none"
          />
          <path
            d="M11 10c2-1.500 4.500 0 4.500 2 0 1.500-1 2-1 3s1 2.500 4 2.500c2 0 3.500-.8 4.500-2-1 3-3 4-5.500 4-5 0-8-5-6.500-9.500z"
            fill="#dbe6fa"
            stroke="none"
          />
        </Svg>
      </TaskButton>
      <TaskButton label="Microsoft Store">
        <Svg w={24} h={24}>
          <path d="M7.500 6V2.500Q7.500 1 9 1h6q1.500 0 1.500 1.500V6" stroke="#39b7e8" strokeWidth="2" />
          <path d="M.5 5.500h23V20q0 3-3 3h-17q-3 0-3-3z" fill="#174a80" stroke="none" />
          <path d="M7.500 9.500h4v4h-4z" fill="#f25022" stroke="none" />
          <path d="M12.500 9.500h4v4h-4z" fill="#7fba00" stroke="none" />
          <path d="M7.500 14.500h4v4h-4z" fill="#35a8e8" stroke="none" />
          <path d="M12.500 14.500h4v4h-4z" fill="#ffb900" stroke="none" />
        </Svg>
      </TaskButton>
      <TaskButton label="Camtasia">
        <Svg w={24} h={24}>
          <rect width="24" height="24" rx="2" fill="#f4584a" stroke="none" />
          <path d="M19 5.500H9L6.500 8v8L9 18.500h10" stroke="#fff" strokeWidth="3.500" />
        </Svg>
        <span className="absolute bottom-0 h-[3px] w-1.5 rounded-full bg-[#8a8f9c]" />
      </TaskButton>
      <TaskButton label="Excel" active>
        <ExcelIcon size={24} />
        <span className="absolute bottom-0 h-[3px] w-4 rounded-full bg-[#1f66ad]" />
      </TaskButton>

      <button type="button" aria-label="Show hidden icons" className="mr-[22px] ml-auto text-[#222]">
        <Svg w={11} h={8}>
          <path d="M1 6.500L5.500 1.500 10 6.500" strokeWidth="1.500" />
        </Svg>
      </button>
      <span className="w-1 overflow-hidden text-xs text-[#222]">E</span>
    </footer>
  );
}

export default function App() {
  return (
    <div className="flex h-screen flex-col overflow-hidden bg-linear-to-r from-[#e9ebef] via-[#e8ebf4] to-[#e8ecef] font-['Open_Sans','Noto_Sans',sans-serif]">
      <TitleBar />
      <MenuTabs />
      <Ribbon />
      <FormulaBar />
      <Worksheet />
      <SheetTabs />
      <StatusBar />
      <Taskbar />
    </div>
  );
}
